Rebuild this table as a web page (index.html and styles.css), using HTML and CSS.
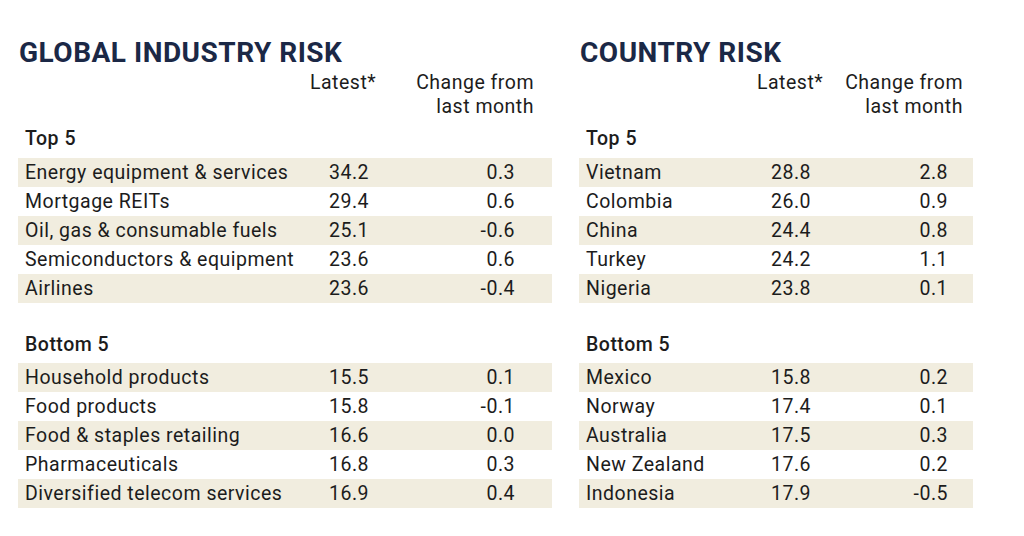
FILE: index.html
```html
<!DOCTYPE html>
<html lang="en">
<head>
<meta charset="utf-8">
<title>Risk tables</title>
<link rel="stylesheet" href="styles.css">
</head>
<body>
<main class="page">
  <section class="panel industry">
    <h2 class="title">GLOBAL INDUSTRY RISK</h2>
    <div class="head">
      <span class="h-latest">Latest*</span>
      <span class="h-change">Change from<br>last month</span>
    </div>
    <div class="group-label">Top 5</div>
    <div class="rows">
      <div class="row"><span class="name">Energy equipment &amp; services</span><span class="latest">34.2</span><span class="change">0.3</span></div>
      <div class="row"><span class="name">Mortgage REITs</span><span class="latest">29.4</span><span class="change">0.6</span></div>
      <div class="row"><span class="name">Oil, gas &amp; consumable fuels</span><span class="latest">25.1</span><span class="change">-0.6</span></div>
      <div class="row"><span class="name">Semiconductors &amp; equipment</span><span class="latest">23.6</span><span class="change">0.6</span></div>
      <div class="row"><span class="name">Airlines</span><span class="latest">23.6</span><span class="change">-0.4</span></div>
    </div>
    <div class="group-label bottom">Bottom 5</div>
    <div class="rows">
      <div class="row"><span class="name">Household products</span><span class="latest">15.5</span><span class="change">0.1</span></div>
      <div class="row"><span class="name">Food products</span><span class="latest">15.8</span><span class="change">-0.1</span></div>
      <div class="row"><span class="name">Food &amp; staples retailing</span><span class="latest">16.6</span><span class="change">0.0</span></div>
      <div class="row"><span class="name">Pharmaceuticals</span><span class="latest">16.8</span><span class="change">0.3</span></div>
      <div class="row"><span class="name">Diversified telecom services</span><span class="latest">16.9</span><span class="change">0.4</span></div>
    </div>
  </section>
  <section class="panel country">
    <h2 class="title">COUNTRY RISK</h2>
    <div class="head">
      <span class="h-latest">Latest*</span>
      <span class="h-change">Change from<br>last month</span>
    </div>
    <div class="group-label">Top 5</div>
    <div class="rows">
      <div class="row"><span class="name">Vietnam</span><span class="latest">28.8</span><span class="change">2.8</span></div>
      <div class="row"><span class="name">Colombia</span><span class="latest">26.0</span><span class="change">0.9</span></div>
      <div class="row"><span class="name">China</span><span class="latest">24.4</span><span class="change">0.8</span></div>
      <div class="row"><span class="name">Turkey</span><span class="latest">24.2</span><span class="change">1.1</span></div>
      <div class="row"><span class="name">Nigeria</span><span class="latest">23.8</span><span class="change">0.1</span></div>
    </div>
    <div class="group-label bottom">Bottom 5</div>
    <div class="rows">
      <div class="row"><span class="name">Mexico</span><span class="latest">15.8</span><span class="change">0.2</span></div>
      <div class="row"><span class="name">Norway</span><span class="latest">17.4</span><span class="change">0.1</span></div>
      <div class="row"><span class="name">Australia</span><span class="latest">17.5</span><span class="change">0.3</span></div>
      <div class="row"><span class="name">New Zealand</span><span class="latest">17.6</span><span class="change">0.2</span></div>
      <div class="row"><span class="name">Indonesia</span><span class="latest">17.9</span><span class="change">-0.5</span></div>
    </div>
  </section>
</main>
</body>
</html>
```
FILE: styles.css
```css
html, body {
  margin: 0;
  padding: 0;
  background: #ffffff;
}

body {
  font-family: Roboto, "Liberation Sans", sans-serif;
  color: #1c1c1c;
  font-size: 19.5px;
  line-height: 24px;
  letter-spacing: 0.5px;
}

.page {
  display: flex;
  padding-left: 18px;
  padding-top: 37px;
}

.panel {
  display: flex;
  flex-direction: column;
}

.industry {
  width: 534px;
}

.country {
  width: 394px;
  margin-left: 27px;
}

.title {
  margin: 0 0 0 1px;
  font-size: 28px;
  line-height: 32px;
  font-weight: 700;
  color: #1b2846;
  letter-spacing: 0.5px;
}

.head {
  display: flex;
  align-items: flex-start;
  margin-top: 2px;
}

.h-latest {
  white-space: nowrap;
}

.h-change {
  margin-left: auto;
  text-align: right;
  white-space: nowrap;
}

.industry .head {
  padding-left: 292px;
  padding-right: 18px;
}

.country .head {
  padding-left: 178px;
  padding-right: 10px;
}

.group-label {
  font-weight: 500;
  padding-left: 7px;
  margin-top: 8px;
  margin-bottom: 7px;
}

.group-label.bottom {
  margin-top: 30px;
  margin-bottom: 6px;
}

.rows {
  display: flex;
  flex-direction: column;
}

.row {
  display: flex;
  height: 29px;
  align-items: center;
}

.row:nth-child(odd) {
  background: #f1eddf;
}

.name {
  padding-left: 7px;
  box-sizing: border-box;
  white-space: nowrap;
}

.latest {
  width: 100px;
}

.change {
  flex: 1;
  text-align: right;
}

.industry .name {
  width: 311px;
}

.industry .change {
  padding-right: 37px;
}

.country .name {
  width: 192px;
}

.country .change {
  padding-right: 25px;
}
```
